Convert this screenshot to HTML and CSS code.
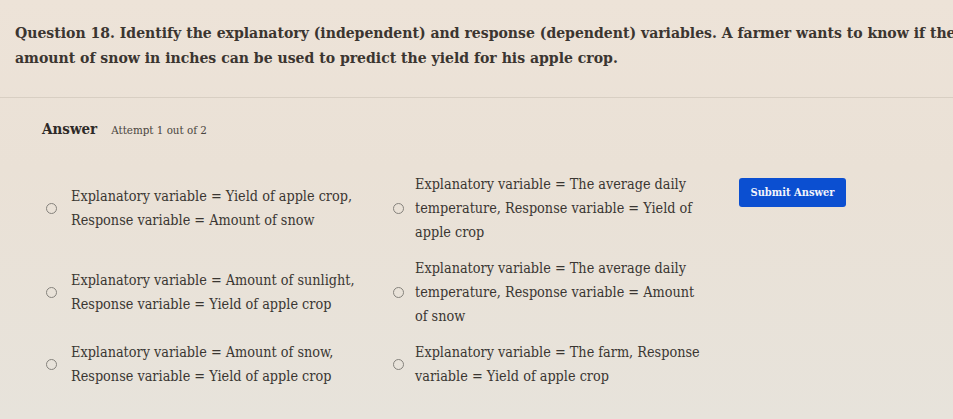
FILE: index.html
```html
<!DOCTYPE html>
<html>
<head>
<meta charset="utf-8">
<link rel="stylesheet" href="styles.css">
</head>
<body>
<div class="page">
  <div class="question">Question 18. Identify the explanatory (independent) and response (dependent) variables. A farmer wants to know if the amount of snow in inches can be used to predict the yield for his apple crop.</div>
  <div class="answer">
    <div class="answer-head"><span class="answer-title">Answer</span><span class="attempt">Attempt 1 out of 2</span></div>
    <div class="body">
      <div class="options">
        <label class="opt opt-l"><span class="radio"></span><span class="txt t-left">Explanatory variable = Yield of apple crop, Response variable = Amount of snow</span></label>
        <label class="opt opt-r"><span class="radio"></span><span class="txt t-right">Explanatory variable = The average daily temperature, Response variable = Yield of apple crop</span></label>
        <label class="opt opt-l"><span class="radio"></span><span class="txt t-left">Explanatory variable = Amount of sunlight, Response variable = Yield of apple crop</span></label>
        <label class="opt opt-r"><span class="radio"></span><span class="txt t-right">Explanatory variable = The average daily temperature, Response variable = Amount of snow</span></label>
        <label class="opt opt-l"><span class="radio"></span><span class="txt t-left">Explanatory variable = Amount of snow, Response variable = Yield of apple crop</span></label>
        <label class="opt opt-r"><span class="radio"></span><span class="txt t-right">Explanatory variable = The farm, Response variable = Yield of apple crop</span></label>
      </div>
      <div class="submit-wrap"><button class="submit">Submit Answer</button></div>
    </div>
  </div>
</div>
</body>
</html>
```
FILE: styles.css
```css
html, body {
  margin: 0;
  padding: 0;
  width: 953px;
  height: 419px;
  overflow: hidden;
}
body {
  background: linear-gradient(180deg, #ede3d8 0%, #eae1d6 40%, #e7e3db 100%);
  font-family: "DejaVu Serif", Georgia, serif;
  font-stretch: condensed;
  color: #3a3632;
}
.page {
  width: 1100px;
}
.question {
  padding: 20px 0 0 15px;
  width: 990px;
  height: 98px;
  box-sizing: border-box;
  font-size: 15.6px;
  font-weight: bold;
  line-height: 25px;
  color: #3b3530;
  border-bottom: 1px solid #d8cfc3;
}
.answer {
  padding: 22px 0 0 42px;
}
.answer-head {
  display: flex;
  align-items: baseline;
  gap: 14px;
}
.answer-title {
  font-size: 15px;
  font-weight: bold;
  color: #2e2a27;
}
.attempt {
  font-size: 11.5px;
  color: #4a4540;
}
.body {
  display: flex;
  margin-top: 34px;
}
.options {
  display: grid;
  grid-template-columns: 347px 346px;
  row-gap: 12px;
  margin-left: 4px;
}
.opt {
  display: flex;
  align-items: center;
}
.opt-l { gap: 14px; }
.opt-r { gap: 11px; }
.radio {
  flex: none;
  width: 9px;
  height: 9px;
  border: 1.5px solid #85827c;
  border-radius: 50%;
}
.txt {
  font-size: 14.3px;
  line-height: 24px;
}
.t-left { width: 295px; }
.t-right { width: 290px; }
.submit-wrap {
  margin-top: 6px;
}
.submit {
  width: 107px;
  height: 29px;
  border: none;
  border-radius: 3px;
  background: #0b4fd1;
  color: #f2f4fb;
  font-family: "DejaVu Serif", Georgia, serif;
  font-stretch: condensed;
  font-size: 11px;
  font-weight: bold;
  padding: 0;
}
```
